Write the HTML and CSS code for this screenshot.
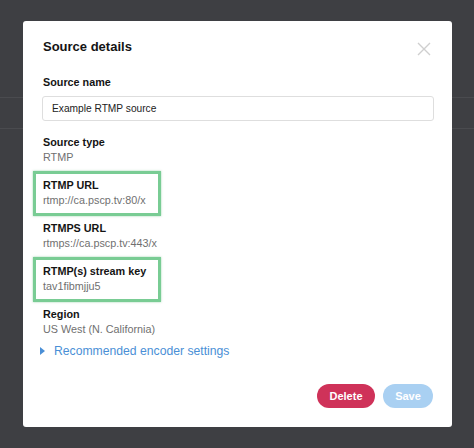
FILE: index.html
```html
<!DOCTYPE html>
<html lang="en">
<head>
  <meta charset="UTF-8">
  <title>Source details</title>
  <link rel="stylesheet" href="styles.css">
</head>
<body>
  <div class="backdrop">
    <div class="modal">
      <div class="modal-header">
        <h2>Source details</h2>
        <button class="close" aria-label="Close">
          <svg width="14" height="14" viewBox="0 0 14 14">
            <path d="M1 1 L13 13 M13 1 L1 13" stroke="#cfcfcf" stroke-width="1.4" fill="none"/>
          </svg>
        </button>
      </div>

      <label class="label" for="sourceName">Source name</label>
      <input class="input" id="sourceName" type="text" value="Example RTMP source">

      <div class="field first">
        <div class="label">Source type</div>
        <div class="value">RTMP</div>
      </div>
      <div class="field highlight">
        <div class="label">RTMP URL</div>
        <div class="value">rtmp://ca.pscp.tv:80/x</div>
      </div>
      <div class="field">
        <div class="label">RTMPS URL</div>
        <div class="value">rtmps://ca.pscp.tv:443/x</div>
      </div>
      <div class="field highlight">
        <div class="label">RTMP(s) stream key</div>
        <div class="value">tav1fibmjju5</div>
      </div>
      <div class="field">
        <div class="label">Region</div>
        <div class="value">US West (N. California)</div>
      </div>

      <a class="toggle" href="#">
        <span class="caret"></span>
        Recommended encoder settings
      </a>

      <div class="actions">
        <button class="btn delete">Delete</button>
        <button class="btn save" disabled>Save</button>
      </div>
    </div>
  </div>
</body>
</html>
```

FILE: styles.css
```css
html, body {
  margin: 0;
  padding: 0;
  height: 100%;
  font-family: 'Liberation Sans', Arial, sans-serif;
}
body {
  background-color: #3e3f43;
  background-image:
    linear-gradient(#4a4b4f, #4a4b4f),
    linear-gradient(#4a4b4f, #4a4b4f);
  background-size: 100% 1px, 100% 1px;
  background-position: 0 97px, 0 128px;
  background-repeat: no-repeat;
  overflow: hidden;
}
.backdrop {
  padding: 21px 0 0 23px;
}
.modal {
  box-sizing: border-box;
  width: 429px;
  height: 406px;
  background: #fff;
  border-radius: 3px;
  padding: 18px 19px 19px 20px;
  display: flex;
  flex-direction: column;
}
.modal-header {
  display: flex;
  justify-content: space-between;
  align-items: flex-start;
}
h2 {
  margin: 0;
  font-size: 13px;
  line-height: 16px;
  font-weight: bold;
  color: #141414;
}
.close {
  border: none;
  background: none;
  padding: 0;
  margin: 3px 2px 0 0;
  width: 14px;
  height: 14px;
  cursor: pointer;
}
.label {
  display: block;
  font-size: 10.8px;
  line-height: 15px;
  font-weight: bold;
  color: #141414;
}
.modal-header + .label {
  margin-top: 18.5px;
}
.input {
  box-sizing: border-box;
  margin: 6.5px 0 0 -1px;
  width: 392px;
  height: 25px;
  border: 1px solid #dedede;
  border-radius: 3px;
  padding: 0 9px;
  font-family: inherit;
  font-size: 10.2px;
  color: #222;
}
.field {
  position: relative;
  margin-top: 13px;
}
.field.first {
  margin-top: 13.5px;
}
.field .value {
  font-size: 10.8px;
  line-height: 15px;
  color: #707070;
}
.field.highlight::before {
  content: "";
  position: absolute;
  left: -10px;
  top: -6.5px;
  width: 122px;
  height: 39px;
  border: 3px solid #79cc94;
  box-shadow: 0 0 2px rgba(90, 180, 120, 0.6);
}
.toggle {
  margin-top: 6.5px;
  display: flex;
  align-items: center;
  font-size: 12.2px;
  line-height: 16px;
  color: #4a8fd6;
  text-decoration: none;
}
.caret {
  width: 0;
  height: 0;
  margin: 0 9px 0 -3px;
  border-top: 4px solid transparent;
  border-bottom: 4px solid transparent;
  border-left: 5px solid #4a8fd6;
}
.actions {
  margin-top: auto;
  display: flex;
  justify-content: flex-end;
  gap: 8px;
}
.btn {
  height: 24px;
  border: none;
  border-radius: 12px;
  color: #fff;
  font-family: inherit;
  font-weight: bold;
  font-size: 11px;
  padding: 0;
  cursor: pointer;
}
.delete {
  width: 58px;
  background: #cf3259;
}
.save {
  width: 50px;
  background: #a9d0f2;
}
```
